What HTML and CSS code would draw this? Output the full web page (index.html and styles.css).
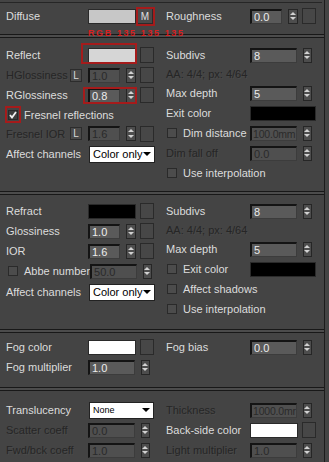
FILE: index.html
```html
<!DOCTYPE html>
<html lang="en">
<head>
    <meta charset="UTF-8">
    <title>Material parameters</title>
    <link rel="stylesheet" href="styles.css">
</head>
<body>
    <div class="panel">
        <div class="top-edge"></div>

        <!-- diffuse -->
        <div class="sec sec-diffuse">
            <div class="col">
                <div class="row"><span class="lbl">Diffuse</span>
                    <div class="ctl"><span class="swatch grey"></span><span class="mbtn">M</span></div>
                </div>
            </div>
            <div class="col">
                <div class="row"><span class="lbl">Roughness</span>
                    <div class="ctl"><span class="num">0.0</span><span class="spin"><i class="up"></i><i class="dn"></i></span><span class="map"></span></div>
                </div>
            </div>
        </div>
        <div class="sep"></div>

        <!-- reflection -->
        <div class="sec sec-reflect">
            <div class="col">
                <div class="row"><span class="lbl">Reflect</span>
                    <div class="ctl"><span class="swatch light"></span><span class="map"></span></div>
                </div>
                <div class="row"><span class="lbl dim">HGlossiness</span><span class="lbtn">L</span>
                    <div class="ctl"><span class="num off">1.0</span><span class="spin"><i class="up"></i><i class="dn"></i></span><span class="map"></span></div>
                </div>
                <div class="row"><span class="lbl">RGlossiness</span>
                    <div class="ctl"><span class="num">0.8</span><span class="spin"><i class="up"></i><i class="dn"></i></span><span class="map"></span></div>
                </div>
                <div class="row r19"><span class="chk on"><svg width="8" height="8" viewBox="0 0 8 8"><path d="M1 4 L3 6.5 L7 1" fill="none" stroke="#f2f2f2" stroke-width="1.8"/></svg></span><span class="lbl">Fresnel reflections</span></div>
                <div class="row r19"><span class="lbl dim">Fresnel IOR</span><span class="lbtn">L</span>
                    <div class="ctl"><span class="num off">1.6</span><span class="spin"><i class="up"></i><i class="dn"></i></span><span class="map"></span></div>
                </div>
                <div class="row r22"><span class="lbl">Affect channels</span>
                    <div class="ctl"><span class="drop">Color only<span class="arr"></span></span></div>
                </div>
            </div>
            <div class="col">
                <div class="row"><span class="lbl">Subdivs</span>
                    <div class="ctl"><span class="num wide">8</span><span class="spin"><i class="up"></i><i class="dn"></i></span></div>
                </div>
                <div class="row r18"><span class="lbl dim">AA: 4/4; px: 4/64</span></div>
                <div class="row"><span class="lbl">Max depth</span>
                    <div class="ctl"><span class="num wide">5</span><span class="spin"><i class="up"></i><i class="dn"></i></span></div>
                </div>
                <div class="row"><span class="lbl">Exit color</span>
                    <div class="ctl"><span class="swatch black full"></span></div>
                </div>
                <div class="row"><span class="chk"></span><span class="lbl">Dim distance</span>
                    <div class="ctl"><span class="num wide off tight">100.0mm</span><span class="spin"><i class="up"></i><i class="dn"></i></span></div>
                </div>
                <div class="row"><span class="lbl dim">Dim fall off</span>
                    <div class="ctl"><span class="num wide off">0.0</span><span class="spin"><i class="up"></i><i class="dn"></i></span></div>
                </div>
                <div class="row"><span class="chk"></span><span class="lbl">Use interpolation</span></div>
            </div>
        </div>
        <div class="sep"></div>

        <!-- refraction -->
        <div class="sec sec-refract">
            <div class="col">
                <div class="row"><span class="lbl">Refract</span>
                    <div class="ctl"><span class="swatch black"></span><span class="map"></span></div>
                </div>
                <div class="row"><span class="lbl">Glossiness</span>
                    <div class="ctl"><span class="num">1.0</span><span class="spin"><i class="up"></i><i class="dn"></i></span><span class="map"></span></div>
                </div>
                <div class="row"><span class="lbl">IOR</span>
                    <div class="ctl"><span class="num">1.6</span><span class="spin"><i class="up"></i><i class="dn"></i></span><span class="map"></span></div>
                </div>
                <div class="row"><span class="chk"></span><span class="lbl">Abbe number</span>
                    <div class="ctl"><span class="num wide off">50.0</span><span class="spin"><i class="up"></i><i class="dn"></i></span></div>
                </div>
                <div class="row r22"><span class="lbl">Affect channels</span>
                    <div class="ctl"><span class="drop">Color only<span class="arr"></span></span></div>
                </div>
            </div>
            <div class="col">
                <div class="row"><span class="lbl">Subdivs</span>
                    <div class="ctl"><span class="num wide">8</span><span class="spin"><i class="up"></i><i class="dn"></i></span></div>
                </div>
                <div class="row r18"><span class="lbl dim">AA: 4/4; px: 4/64</span></div>
                <div class="row"><span class="lbl">Max depth</span>
                    <div class="ctl"><span class="num wide">5</span><span class="spin"><i class="up"></i><i class="dn"></i></span></div>
                </div>
                <div class="row"><span class="chk"></span><span class="lbl">Exit color</span>
                    <div class="ctl"><span class="swatch black full"></span></div>
                </div>
                <div class="row"><span class="chk"></span><span class="lbl">Affect shadows</span></div>
                <div class="row"><span class="chk"></span><span class="lbl">Use interpolation</span></div>
            </div>
        </div>
        <div class="sep"></div>

        <!-- fog -->
        <div class="sec sec-fog">
            <div class="col">
                <div class="row"><span class="lbl">Fog color</span>
                    <div class="ctl"><span class="swatch white"></span><span class="map"></span></div>
                </div>
                <div class="row"><span class="lbl">Fog multiplier</span>
                    <div class="ctl"><span class="num wide">1.0</span><span class="spin"><i class="up"></i><i class="dn"></i></span></div>
                </div>
            </div>
            <div class="col">
                <div class="row"><span class="lbl">Fog bias</span>
                    <div class="ctl"><span class="num wide">0.0</span><span class="spin"><i class="up"></i><i class="dn"></i></span></div>
                </div>
            </div>
        </div>
        <div class="sep"></div>

        <!-- translucency -->
        <div class="sec sec-transl">
            <div class="col">
                <div class="row"><span class="lbl">Translucency</span>
                    <div class="ctl"><span class="drop small">None<span class="arr"></span></span></div>
                </div>
                <div class="row"><span class="lbl dim">Scatter coeff</span>
                    <div class="ctl"><span class="num wide off">0.0</span><span class="spin"><i class="up"></i><i class="dn"></i></span></div>
                </div>
                <div class="row"><span class="lbl dim">Fwd/bck coeff</span>
                    <div class="ctl"><span class="num wide off">1.0</span><span class="spin"><i class="up"></i><i class="dn"></i></span></div>
                </div>
            </div>
            <div class="col">
                <div class="row"><span class="lbl dim">Thickness</span>
                    <div class="ctl"><span class="num wide off tight">1000.0mr</span><span class="spin"><i class="up"></i><i class="dn"></i></span></div>
                </div>
                <div class="row"><span class="lbl">Back-side color</span>
                    <div class="ctl"><span class="swatch white"></span><span class="map"></span></div>
                </div>
                <div class="row"><span class="lbl dim">Light multiplier</span>
                    <div class="ctl"><span class="num wide off">1.0</span><span class="spin"><i class="up"></i><i class="dn"></i></span></div>
                </div>
            </div>
        </div>

        <!-- red annotations drawn over the panel -->
        <div class="mark mark-m"></div>
        <div class="mark mark-reflect"></div>
        <div class="mark mark-rgloss"></div>
        <div class="mark mark-fresnel"></div>
        <div class="rgb-note">RGB 135 135 135</div>
    </div>
</body>
</html>
```

FILE: styles.css
```css
body {
    margin: 0;
    background-color: #444;
    font-family: 'Liberation Sans', Arial, sans-serif;
    font-size: 11px;
    color: #dcdcdc;
}
.panel {
    position: relative;
    width: 325px;
    height: 462px;
    border-right: 1px solid #1c1c1c;
    box-sizing: border-box;
    overflow: hidden;
}
.top-edge {
    height: 2px;
    margin-right: 2px;
    border-bottom: 1px solid #262626;
}
.sep {
    height: 2px;
    background-color: #4c4c4c;
    border-top: 1px solid #181818;
    border-bottom: 1px solid #181818;
}
.sec {
    display: grid;
    grid-template-columns: 148px 150px;
    column-gap: 12px;
    padding-left: 6px;
}
.sec-diffuse { padding: 3px 0 8px 6px; }
.sec-reflect { padding: 7px 0 8px 6px; }
.sec-refract { padding: 6px 0 10px 6px; }
.sec-fog { padding: 4px 0 10px 6px; }
.sec-transl { padding: 9px 0 0 6px; }
.col {
    display: flex;
    flex-direction: column;
}
.row {
    height: 20px;
    display: flex;
    align-items: center;
}
.row.r18 { height: 18px; }
.row.r19 { height: 19px; }
.row.r22 { height: 22px; }
.lbl {
    flex: 1;
    white-space: nowrap;
}
.lbl.dim {
    color: #262626;
    text-shadow: 1px 1px 0 rgba(255,255,255,0.05);
}
.ctl {
    width: 66px;
    display: flex;
    align-items: center;
    flex-shrink: 0;
}
.swatch {
    width: 48px;
    height: 15px;
    box-sizing: border-box;
    border: 1px solid #2a2a2a;
    margin-right: 4px;
}
.swatch.full { width: 66px; margin-right: 0; }
.swatch.grey { background-color: #c7c7c7; margin-right: 1px; }
.swatch.light { background-color: #d6d6d6; }
.swatch.black { background-color: #000; }
.swatch.white { background-color: #fff; }
.mbtn {
    width: 16px;
    height: 16px;
    box-sizing: border-box;
    border: 1px solid #2c2c2c;
    background-color: #4a4a4a;
    color: #e0e0e0;
    font-size: 10px;
    display: flex;
    align-items: center;
    justify-content: center;
}
.lbtn {
    width: 12px;
    height: 13px;
    box-sizing: border-box;
    border: 1px solid #2c2c2c;
    background-color: #4a4a4a;
    color: #d8d8d8;
    font-size: 10px;
    display: flex;
    align-items: center;
    justify-content: center;
    margin-right: 6px;
}
.map {
    width: 14px;
    height: 16px;
    box-sizing: border-box;
    border: 1px solid #2a2a2a;
    background-color: #474747;
}
.num {
    width: 32px;
    height: 15px;
    box-sizing: border-box;
    background-color: #5a5a5a;
    border-top: 2px solid #141414;
    border-left: 2px solid #141414;
    border-right: 1px solid #3c3c3c;
    border-bottom: 1px solid #3c3c3c;
    color: #ececec;
    font-size: 11px;
    line-height: 12px;
    padding-left: 2px;
    overflow: hidden;
    white-space: nowrap;
    margin-right: 6px;
}
.num.wide { width: 50px; }
.num.tight {
    font-size: 10.5px;
    letter-spacing: -0.2px;
    padding-left: 1px;
}
.num.off {
    background-color: #4f4f4f;
    color: #2a2a2a;
}
.spin {
    width: 10px;
    height: 15px;
    box-sizing: border-box;
    border: 1px solid #262626;
    background-color: #4d4d4d;
    display: flex;
    flex-direction: column;
    align-items: center;
    justify-content: space-evenly;
    margin-right: 4px;
}
.spin .up {
    border-left: 3px solid transparent;
    border-right: 3px solid transparent;
    border-bottom: 3px solid #d2d2d2;
}
.spin .dn {
    border-left: 3px solid transparent;
    border-right: 3px solid transparent;
    border-top: 3px solid #d2d2d2;
}
.chk {
    width: 10px;
    height: 10px;
    box-sizing: border-box;
    border: 1px solid #2a2a2a;
    background-color: #4c4c4c;
    margin: 0 6px 0 2px;
    display: flex;
    align-items: center;
    justify-content: center;
    flex-shrink: 0;
}
.sec .col:last-child .chk { margin-left: 1px; }
.chk.on { background-color: #3e3e3e; }
.drop {
    width: 68px;
    height: 17px;
    margin-left: 1px;
    box-sizing: border-box;
    background-color: #fff;
    color: #000;
    border: 1px solid #222;
    font-size: 11px;
    padding: 0 3px 0 3px;
    display: flex;
    align-items: center;
    justify-content: space-between;
    white-space: nowrap;
}
.drop.small { font-size: 9px; }
.arr {
    border-left: 4px solid transparent;
    border-right: 4px solid transparent;
    border-top: 4px solid #000;
}
.mark {
    position: absolute;
    border: 2px solid #a51b1b;
    box-sizing: border-box;
}
.mark-m { left: 136px; top: 7px; width: 19px; height: 19px; }
.mark-reflect { left: 81px; top: 43px; width: 56px; height: 21px; }
.mark-rgloss { left: 83px; top: 87px; width: 54px; height: 17px; }
.mark-fresnel { left: 5px; top: 106px; width: 16px; height: 17px; }
.rgb-note {
    position: absolute;
    left: 88px;
    top: 28px;
    color: #d82020;
    font-size: 9px;
    font-weight: bold;
    letter-spacing: 1.6px;
}
```
